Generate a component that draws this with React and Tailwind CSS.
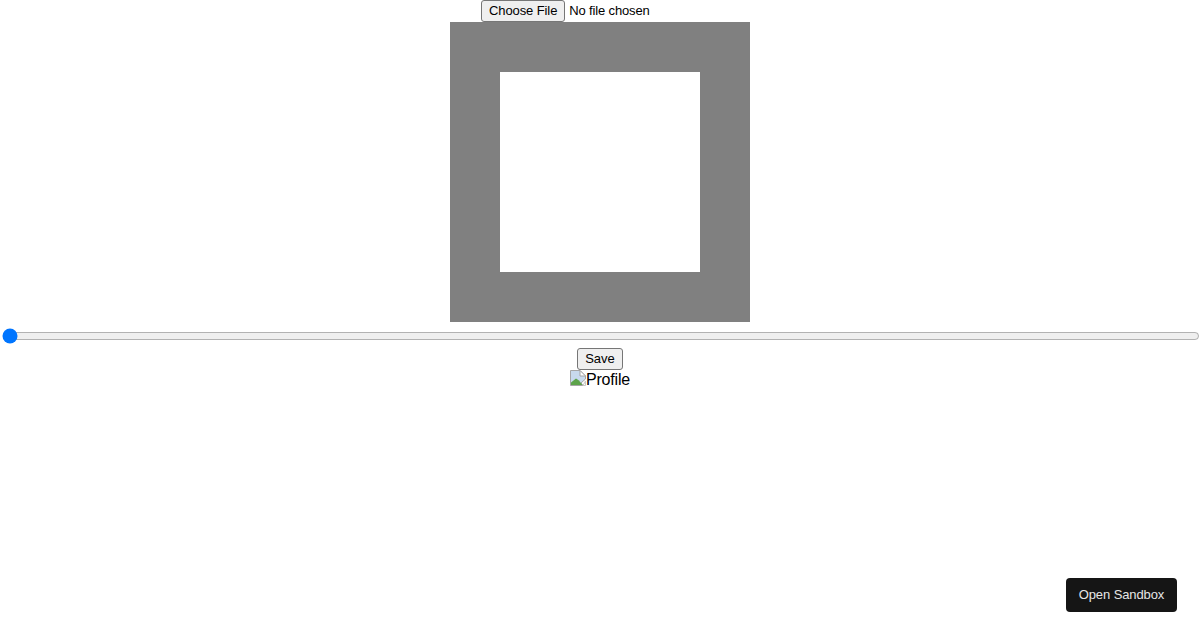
export default function App() {
  return (
    <div className="text-center font-['Liberation_Sans',Arial,sans-serif] text-black">
      <input
        type="file"
        className="block w-[238px] h-[22px] ml-[481px] text-left text-[13px] leading-[15px] tracking-[-0.15px] file:h-[22px] file:py-0 file:mr-1 file:px-[7px] file:pb-px file:bg-[#efefef] file:border file:border-[#767676] file:rounded-[3px] file:text-black file:text-[13px] file:tracking-[-0.1px]"
      />
      <div className="flex justify-center">
        <div className="w-[300px] h-[300px] bg-[#808080] flex items-center justify-center">
          <div className="w-[200px] h-[200px] bg-white"></div>
        </div>
      </div>
      <div className="pt-[6px] pb-[4px] pl-[2px] h-[26px]">
        <input type="range" min="0" max="100" defaultValue="0" className="block w-full h-4" />
      </div>
      <div className="flex justify-center">
        <button className="w-[46px] h-[22px] bg-[#efefef] border border-[#767676] rounded-[3px] text-[13px] text-black">Save</button>
      </div>
      <div className="flex justify-center h-[18px]">
        <span className="flex items-start text-base leading-5 tracking-[-0.2px]">
          {/* broken image placeholder */}
          <svg width="16" height="16" viewBox="0 0 16 16" className="shrink-0">
            <path d="M0.5 0.5H10L15.5 6V9L11 13L13 15.5H0.5Z" fill="#c8daee" stroke="#a6a6a6" />
            <path d="M10 0.5V6H15.5Z" fill="#ffffff" stroke="#a6a6a6" />
            <path d="M1 15V12.5L6 8.5L9 10.5L12.5 15Z" fill="#5da34a" />
            <path d="M15.5 11V15.5H13L15.5 11Z" fill="#ffffff" stroke="#c8c8c8" />
          </svg>
          Profile
        </span>
      </div>
      <button className="fixed right-[23px] bottom-[18px] w-[111px] h-[34px] rounded bg-[#151515] text-[#e6e6e6] text-[13px] tracking-[-0.1px]">Open Sandbox</button>
    </div>
  );
}
